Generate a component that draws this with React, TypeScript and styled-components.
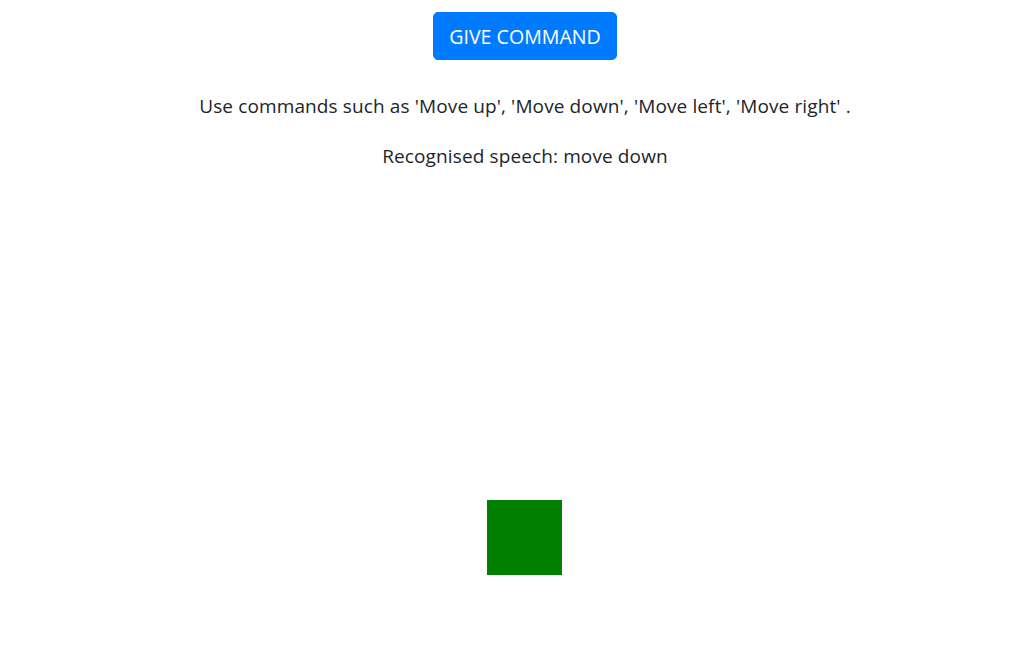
import styled, { createGlobalStyle } from "styled-components";

const GlobalStyle = createGlobalStyle`
  html, body {
    margin: 0;
    padding: 0;
    background: #fff;
  }
  body {
    font-family: "Open Sans", "Noto Sans", sans-serif;
    color: #212529;
    overflow: hidden;
  }
`;

const Page = styled.div`
  width: 1050px;
  padding-top: 12px;
  display: flex;
  flex-direction: column;
  align-items: center;
  text-align: center;
`;

const CommandButton = styled.button`
  font-family: inherit;
  font-size: 19.6px;
  line-height: 30px;
  padding: 2px 0 0;
  width: 184px;
  height: 48px;
  white-space: nowrap;
  color: #fff;
  background-color: #007bff;
  border: 1px solid #007bff;
  border-radius: 5px;
  cursor: pointer;
`;

const Hint = styled.p<{ $top: number }>`
  margin: ${(p) => p.$top}px 0 0;
  font-size: 19px;
  letter-spacing: 0.12px;
  line-height: 28px;
`;

const Stage = styled.div`
  position: relative;
  width: 100%;
  height: 480px;
`;

const Square = styled.div<{ $y: number }>`
  position: absolute;
  left: 487px;
  top: ${(p) => p.$y}px;
  width: 75px;
  height: 75px;
  background-color: green;
`;

export default function App() {
  const y = 330;
  return (
    <>
      <GlobalStyle />
      <Page>
        <CommandButton>GIVE COMMAND</CommandButton>
        <Hint $top={32}>
          Use commands such as 'Move up', 'Move down', 'Move left', 'Move right' .
        </Hint>
        <Hint $top={22}>Recognised speech: move down</Hint>
        <Stage>
          <Square $y={y} />
        </Stage>
      </Page>
    </>
  );
}
